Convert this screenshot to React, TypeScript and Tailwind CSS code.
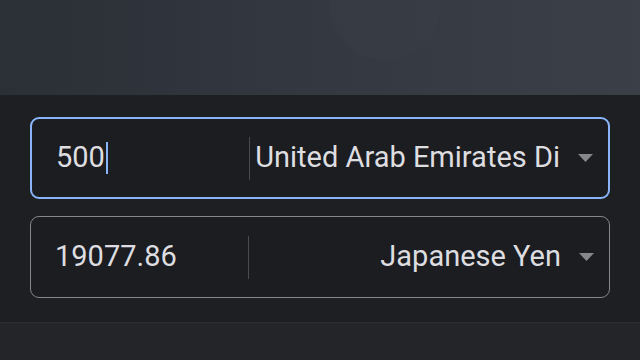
export default function App() {
  const rows = [
    { amount: '500', currency: 'United Arab Emirates Di', active: true },
    { amount: '19077.86', currency: 'Japanese Yen', active: false },
  ]

  return (
    <div className="w-[640px] h-[360px] overflow-hidden bg-[#1e1f22] flex flex-col font-['Roboto',sans-serif]">
      {/* Header */}
      <div className="relative h-[95px] shrink-0 overflow-hidden bg-gradient-to-r from-[#2b3037] via-[#333841] to-[#3b4048]">
        <div className="absolute left-[330px] top-[-50px] w-[110px] h-[110px] rounded-full bg-[#3d424a]/30" />
      </div>

      {/* Converter fields */}
      <div className="flex flex-col gap-[17px] px-[30px] pt-[22px]">
        {rows.map((row) => (
          <div
            key={row.amount}
            className={`h-[82px] flex items-center rounded-[9px] bg-[#1c1d21] ${
              row.active ? 'border-2 border-[#8ab4f8]' : 'border border-[#85868a]'
            }`}
          >
            <div className="w-[217px] pl-[24px] flex items-center text-[29px] text-[#dedee0]">
              <span>{row.amount}</span>
              {row.active && <span className="ml-[1px] w-[2px] h-[32px] bg-[#8ab4f8]" />}
            </div>
            <div className="w-px h-[43px] bg-[#4a4b4f]" />
            <div className="flex-1 flex items-center justify-end min-w-0 pl-[5px] pr-[15px]">
              <span className="text-[29px] text-[#dedee0] whitespace-nowrap overflow-hidden">{row.currency}</span>
              <svg className="ml-[18px] shrink-0" width="15" height="8" viewBox="0 0 15 8">
                <path d="M0 0h15L7.5 8z" fill="#86878b" />
              </svg>
            </div>
          </div>
        ))}
      </div>

      {/* Bottom panel */}
      <div className="mt-auto h-[38px] bg-[#242529] border-t border-[#2e2f33]" />
    </div>
  )
}
